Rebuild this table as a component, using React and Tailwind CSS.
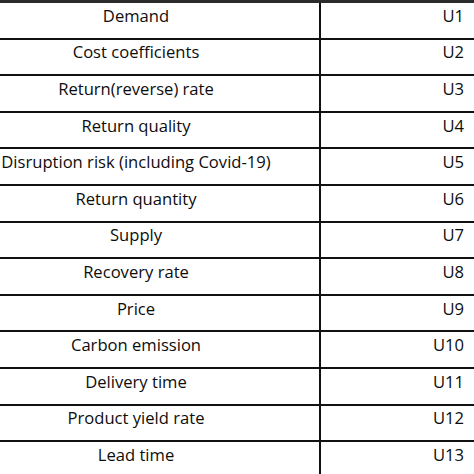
import React from 'react';

const rows = [
  ['Demand', 'U1'],
  ['Cost coefficients', 'U2'],
  ['Return(reverse) rate', 'U3'],
  ['Return quality', 'U4'],
  ['Disruption risk (including Covid-19)', 'U5'],
  ['Return quantity', 'U6'],
  ['Supply', 'U7'],
  ['Recovery rate', 'U8'],
  ['Price', 'U9'],
  ['Carbon emission', 'U10'],
  ['Delivery time', 'U11'],
  ['Product yield rate', 'U12'],
  ['Lead time', 'U13'],
];

export default function App() {
  return (
    <div
      className="w-[474px] h-[474px] overflow-hidden bg-white text-[#0d0d0d]"
      style={{ fontFamily: '"Open Sans", "Liberation Sans", sans-serif' }}
    >
      <div className="h-[3px] bg-[#2b2b2b]" />
      {rows.map(([factor, code]) => (
        <div key={code} className="flex h-[36.6px] border-b-2 border-[#111]">
          <div className="w-[321px] shrink-0 flex items-center justify-center pr-[47px] pb-[8px] text-[16.6px] whitespace-nowrap border-r-2 border-[#111]">
            {factor}
          </div>
          <div className="flex-1 flex items-center justify-end pr-[10px] pb-[8px] text-[16.6px]">
            {code}
          </div>
        </div>
      ))}
    </div>
  );
}
